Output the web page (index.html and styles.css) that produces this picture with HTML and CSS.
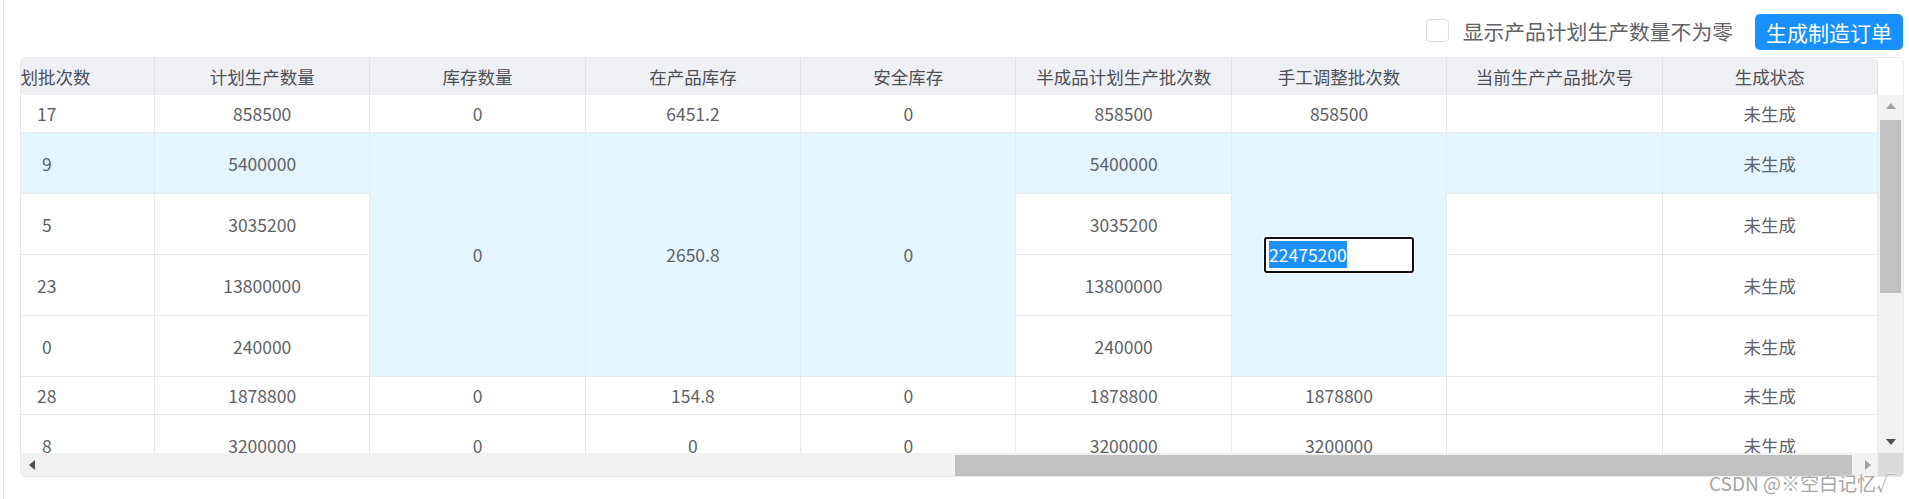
FILE: index.html
```html
<!DOCTYPE html>
<html>
<head>
  <meta charset="utf-8">
  <title>生产计划</title>
  <link rel="stylesheet" href="styles.css">
</head>
<body>
  <div class="page">
    <div class="toolbar">
      <span class="check"></span>
      <span class="check-label">显示产品计划生产数量不为零</span>
      <button class="btn-primary">生成制造订单</button>
    </div>

    <div class="grid-wrap">
      <div class="head-view">
        <table class="tbl">
          <colgroup><col><col><col><col><col><col><col><col><col></colgroup>
          <tr class="head-row">
            <th>计划批次数</th>
            <th>计划生产数量</th>
            <th>库存数量</th>
            <th>在产品库存</th>
            <th>安全库存</th>
            <th>半成品计划生产批次数</th>
            <th>手工调整批次数</th>
            <th>当前生产产品批次号</th>
            <th>生成状态</th>
          </tr>
        </table>
      </div>
      <div class="gutter"></div>

      <div class="body-view">
        <table class="tbl">
          <colgroup><col><col><col><col><col><col><col><col><col></colgroup>
          <tr class="short">
            <td>17</td><td>858500</td><td>0</td><td>6451.2</td><td>0</td><td>858500</td><td>858500</td><td></td><td>未生成</td>
          </tr>
          <tr class="tall hover">
            <td>9</td><td>5400000</td>
            <td rowspan="4">0</td>
            <td rowspan="4">2650.8</td>
            <td rowspan="4">0</td>
            <td>5400000</td>
            <td rowspan="4"><div class="edit"><span class="sel">22475200</span></div></td>
            <td></td><td>未生成</td>
          </tr>
          <tr class="tall">
            <td>5</td><td>3035200</td><td>3035200</td><td></td><td>未生成</td>
          </tr>
          <tr class="tall">
            <td>23</td><td>13800000</td><td>13800000</td><td></td><td>未生成</td>
          </tr>
          <tr class="tall">
            <td>0</td><td>240000</td><td>240000</td><td></td><td>未生成</td>
          </tr>
          <tr class="short">
            <td>28</td><td>1878800</td><td>0</td><td>154.8</td><td>0</td><td>1878800</td><td>1878800</td><td></td><td>未生成</td>
          </tr>
          <tr class="tall">
            <td>8</td><td>3200000</td><td>0</td><td>0</td><td>0</td><td>3200000</td><td>3200000</td><td></td><td>未生成</td>
          </tr>
        </table>
      </div>

      <div class="vbar">
        <span class="sb-btn"><i class="tri-up off"></i></span>
        <span class="vthumb"></span>
        <span class="sb-btn end"><i class="tri-down"></i></span>
      </div>

      <div class="hbar">
        <span class="sb-btn side"><i class="tri-left"></i></span>
        <span class="hthumb"></span>
        <span class="sb-btn side"><i class="tri-right off"></i></span>
      </div>
      <div class="corner"></div>
    </div>

    <div class="mark">CSDN @※空白记忆√</div>
  </div>
</body>
</html>
```

FILE: styles.css
```css
*{
  box-sizing: border-box;
}
html,body{
  margin: 0;
  background: #fff;
}
body{
  font-family: "Noto Sans CJK SC", "Noto Sans", sans-serif;
  color: #606266;
}

.page{
  position: relative;
  height: 499px;
  margin-left: 3px;
  border-left: 1px solid #e8eaec;
  padding: 14px 5px 0 16px;
}

/* 顶部工具栏 */
.toolbar{
  display: flex;
  justify-content: flex-end;
  align-items: center;
  height: 36px;
  margin-bottom: 7px;
}
.check{
  width: 23px;
  height: 23px;
  border: 1px solid #dcdee2;
  border-radius: 4px;
  margin-top: -3px;
}
.check-label{
  margin: -3px 22px 0 14px;
  font-size: 20.8px;
  line-height: 24px;
  color: #606266;
}
.btn-primary{
  width: 148px;
  height: 36px;
  margin-right: 1px;
  padding: 0;
  border: 0;
  border-radius: 5px;
  background: #1890ff;
  color: #fff;
  font-family: inherit;
  font-size: 21px;
  line-height: 36px;
}

/* 表格 */
.grid-wrap{
  display: grid;
  grid-template-columns: 1857px 25px;
  grid-template-rows: 37px 358px 23px;
  width: 1884px;
  border: 1px solid #e8eaec;
  border-radius: 5px;
  overflow: hidden;
}
.head-view{
  overflow: hidden;
  background: #eff0f4;
  border-top-right-radius: 5px;
}
.gutter{
  background: #fff;
}
.body-view{
  overflow: hidden;
}
.tbl{
  table-layout: fixed;
  border-collapse: separate;
  border-spacing: 0;
  width: 1938.375px;
  margin-left: -81.4px;
  font-size: 17.5px;
}
.tbl col{
  width: 215.375px;
}
.tbl th,.tbl td{
  padding: 0;
  text-align: center;
  vertical-align: middle;
  border-right: 1px solid #e8eaec;
  white-space: nowrap;
  overflow: hidden;
}
.tbl th{
  height: 37px;
  font-weight: normal;
  color: #4c4f56;
  border-right-color: #e1e2e6;
}
.tbl td{
  border-bottom: 1px solid #e8eaec;
}
.short{
  height: 38px;
}
.tall{
  height: 61px;
}
.hover td{
  background: #e4f5fe;
}

.edit{
  width: 150px;
  height: 36px;
  margin: 0 auto;
  padding: 2px 3px;
  border: 2px solid #111;
  border-radius: 3px;
  background: #fff;
  box-shadow: 0 0 0 1px #fff;
  text-align: left;
}
.sel{
  display: inline-block;
  height: 27px;
  line-height: 27px;
  background: #1e8fff;
  color: #fff;
}

/* 滚动条 */
.vbar{
  display: flex;
  flex-direction: column;
  align-items: center;
  background: #f1f1f1;
}
.sb-btn{
  display: flex;
  justify-content: center;
  align-items: center;
  width: 25px;
  height: 22px;
  flex: none;
}
.sb-btn.end{
  margin-top: auto;
  height: 23px;
}
.sb-btn.side{
  width: 21px;
  height: 23px;
}
.vthumb{
  width: 21px;
  height: 173px;
  margin-top: 3px;
  background: #c1c1c1;
}
.hbar{
  display: flex;
  background: #f1f1f1;
}
.hthumb{
  width: 897px;
  height: 21px;
  margin: 2px 0 0 913px;
  background: #c1c1c1;
}
.hbar .sb-btn.side:last-child{
  margin-left: auto;
}
.corner{
  background: #dcdcdc;
}

.tri-up,.tri-down,.tri-left,.tri-right{
  width: 0;
  height: 0;
  border: 5px solid transparent;
}
.tri-up{
  border-bottom: 6px solid #505050;
  border-top: 0;
}
.tri-down{
  border-top: 6px solid #505050;
  border-bottom: 0;
}
.tri-left{
  border-right: 6px solid #505050;
  border-left: 0;
}
.tri-right{
  border-left: 6px solid #505050;
  border-right: 0;
}
.tri-up.off{
  border-bottom-color: #a3a3a3;
}
.tri-right.off{
  border-left-color: #a3a3a3;
}

.mark{
  position: absolute;
  right: 14px;
  bottom: 3px;
  font-size: 19px;
  color: #a6a6a6;
  text-shadow: 0 0 2px #fff, 0 0 1px #fff;
}
```
